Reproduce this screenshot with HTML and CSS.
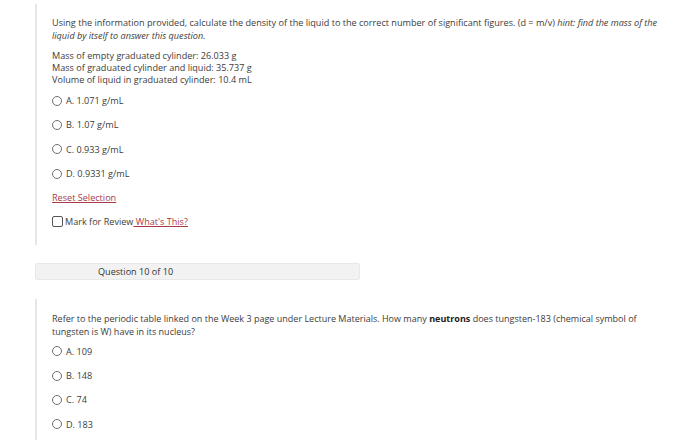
FILE: index.html
```html
<!DOCTYPE html>
<html lang="en">
<head>
<meta charset="utf-8">
<title>Quiz</title>
<link rel="stylesheet" href="styles.css">
</head>
<body>
<div class="page">
  <section class="question q1">
    <p class="prompt">Using the information provided, calculate the density of the liquid to the correct number of significant figures. (d = m/v) <em>hint: find the mass of the<br>liquid by itself to answer this question.</em></p>
    <div class="data">
      <div>Mass of empty graduated cylinder: 26.033 g</div>
      <div>Mass of graduated cylinder and liquid: 35.737 g</div>
      <div>Volume of liquid in graduated cylinder: 10.4 mL</div>
    </div>
    <ul class="options">
      <li class="option"><span class="radio"></span><span>A. 1.071 g/mL</span></li>
      <li class="option"><span class="radio"></span><span>B. 1.07 g/mL</span></li>
      <li class="option"><span class="radio"></span><span>C. 0.933 g/mL</span></li>
      <li class="option"><span class="radio"></span><span>D. 0.9331 g/mL</span></li>
    </ul>
    <div class="reset-row"><a class="link" href="#">Reset Selection</a></div>
    <div class="mark-row"><span class="checkbox"></span><span>Mark for Review</span><a class="link" href="#">&nbsp;What's This?</a></div>
  </section>

  <div class="qbar">Question 10 of 10</div>

  <section class="question q2">
    <p class="prompt q2-prompt">Refer to the periodic table linked on the Week 3 page under Lecture Materials. How many <strong>neutrons</strong> does tungsten-183 (chemical symbol of<br>tungsten is W) have in its nucleus?</p>
    <ul class="options">
      <li class="option"><span class="radio"></span><span>A. 109</span></li>
      <li class="option"><span class="radio"></span><span>B. 148</span></li>
      <li class="option"><span class="radio"></span><span>C. 74</span></li>
      <li class="option"><span class="radio"></span><span>D. 183</span></li>
    </ul>
  </section>
</div>
</body>
</html>
```
FILE: styles.css
```css
html, body {
  margin: 0;
  padding: 0;
  background: #ffffff;
}
body {
  font-family: "Open Sans", "Noto Sans", sans-serif;
  font-size: 9.1px;
  color: #3c3c3c;
  overflow: hidden;
}
.page {
  width: 700px;
  height: 440px;
  overflow: hidden;
}
.question {
  margin-left: 35px;
  border-left: 2px solid #e6e6e6;
  padding-left: 15px;
}
.q1 {
  margin-top: 4px;
  padding-top: 12px;
  padding-bottom: 10px;
}
.prompt {
  margin: 0;
  line-height: 13px;
}
.q2-prompt {
  font-size: 9.02px;
}
.prompt em { font-style: italic; }
.prompt strong { font-weight: 700; color: #222; }
.data {
  margin-top: 7.5px;
  line-height: 12px;
}
.options {
  list-style: none;
  margin: 3px 0 0;
  padding: 0;
}
.option {
  height: 24.3px;
  display: flex;
  align-items: center;
}
.radio {
  width: 8px;
  height: 8px;
  border: 1px solid #6f6f6f;
  border-radius: 50%;
  margin-left: 0;
  margin-right: 4px;
  flex: none;
}
.reset-row {
  height: 23px;
  display: flex;
  align-items: center;
}
.link {
  color: #a8394a;
  text-decoration: underline;
}
.mark-row {
  height: 26px;
  display: flex;
  align-items: center;
}
.checkbox {
  width: 9px;
  height: 9px;
  border: 1px solid #555;
  border-radius: 2px;
  margin-right: 2px;
  flex: none;
}
.qbar {
  margin: 18px 0 0 35px;
  width: 325px;
  height: 17px;
  box-sizing: border-box;
  background: #f2f2f2;
  border: 1px solid #e8e8e8;
  border-radius: 2px;
  padding-left: 62px;
  line-height: 15px;
  color: #333;
}
.q2 {
  margin-top: 19px;
  padding-top: 13px;
  padding-bottom: 20px;
}
.q2 .options {
  margin-top: 1.5px;
}
```
